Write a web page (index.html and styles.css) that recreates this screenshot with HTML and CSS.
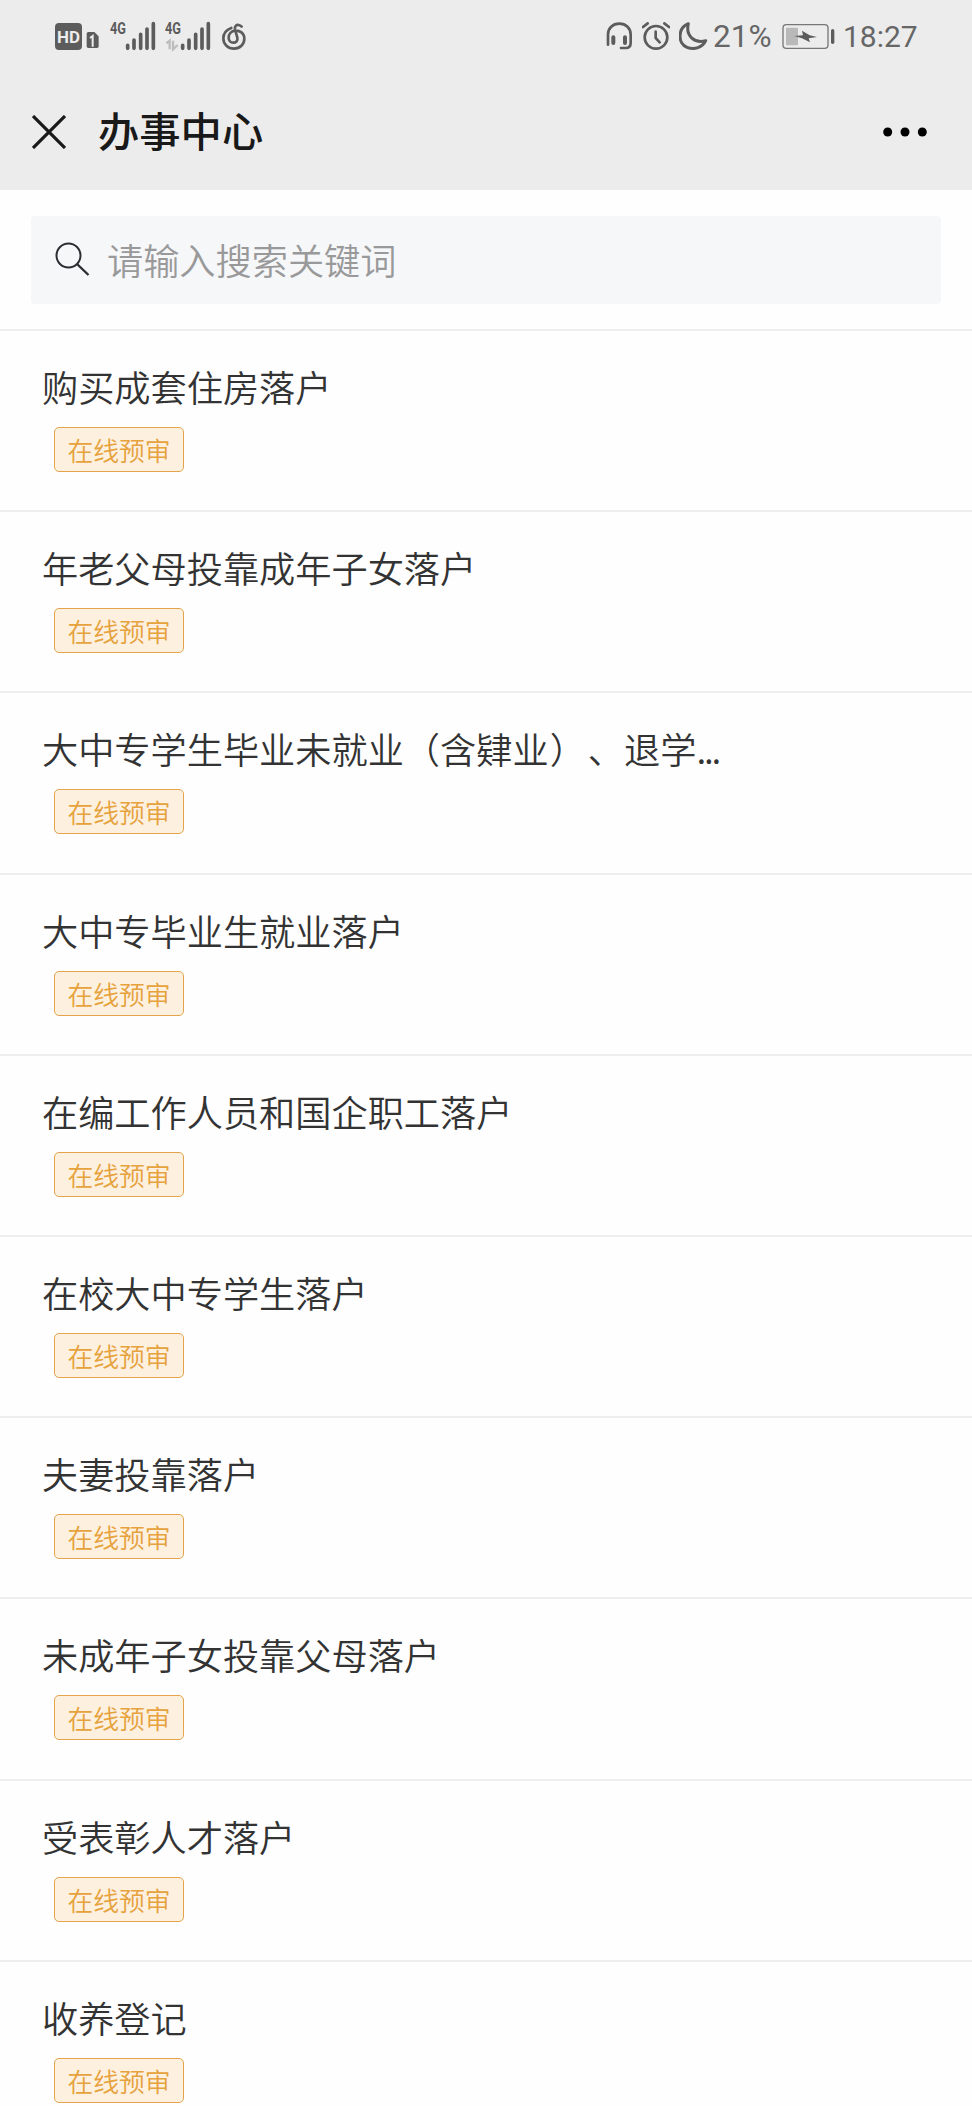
FILE: index.html
```html
<!DOCTYPE html>
<html lang="zh-CN">
<head>
    <meta charset="UTF-8">
    <meta name="viewport" content="width=device-width, initial-scale=1.0">
    <title>办事中心</title>
    <link rel="stylesheet" href="styles.css">
</head>
<body>
    <header class="header">
        <div class="status">
            <div class="status-left">
                <svg class="hd" width="44" height="30" viewBox="47 33 132 90">
                    <rect x="47" y="39" width="81" height="81" rx="12" fill="#5c5c5c"/>
                    <text x="53" y="98" font-size="47" font-weight="700" fill="#ececec" textLength="69" lengthAdjust="spacingAndGlyphs">HD</text>
                    <path d="M147 66h18l13 13v30q0 5-5 5h-26q-5 0-5-5v-38q0-5 5-5z" fill="#5c5c5c"/>
                    <path d="M152 84l8-6v32" fill="none" stroke="#ececec" stroke-width="6"/>
                </svg>
                <svg class="signal" width="46" height="42" viewBox="210 15 138 126">
                    <text x="210" y="73" font-size="49" font-weight="700" fill="#5c5c5c" textLength="48" lengthAdjust="spacingAndGlyphs">4G</text>
                    <path d="M263 106v9M282 90v25M302 73v42M321 57v58M340 41v74" stroke="#5c5c5c" stroke-width="11" stroke-linecap="round"/>
                </svg>
                <svg class="signal2" width="46" height="42" viewBox="374 15 138 126">
                    <text x="374" y="73" font-size="49" font-weight="700" fill="#5c5c5c" textLength="48" lengthAdjust="spacingAndGlyphs">4G</text>
                    <path d="M378 100l10-8v26M398 92v26l14-13" fill="none" stroke="#bdbdbd" stroke-width="7"/>
                    <path d="M427 106v9M446 90v25M466 73v42M485 57v58M504 41v74" stroke="#5c5c5c" stroke-width="11" stroke-linecap="round"/>
                </svg>
                <svg class="music" width="24" height="30" viewBox="546 33 72 90">
                    <path d="M574 54C558 60 550 71 550 85c0 18 14 31 32 31s31-13 31-30c0-17-14-25-27-24-12 1-20 10-20 21 0 9 6 15 14 15s14-6 12-15l-7-25c-2-9 4-14 11-13q5 1 9 5" fill="none" stroke="#5c5c5c" stroke-width="8" stroke-linecap="round"/>
                </svg>
            </div>
            <div class="status-right">
                <svg class="headset" width="27" height="30" viewBox="49 33 81 90">
                    <path d="M55 104V74c0-20 14-33 34-33s34 13 34 33v25q0 15-15 15H94" fill="none" stroke="#5c5c5c" stroke-width="8" stroke-linecap="round"/>
                    <path d="M71 82v17M106 82v17" stroke="#5c5c5c" stroke-width="12" stroke-linecap="round"/>
                </svg>
                <svg class="alarm" width="28" height="30" viewBox="157 33 84 90">
                    <circle cx="199" cy="82" r="34" fill="none" stroke="#5c5c5c" stroke-width="8"/>
                    <path d="M198 65v19l12 13M160 51l14-11M238 51l-14-11" fill="none" stroke="#5c5c5c" stroke-width="8" stroke-linecap="round"/>
                </svg>
                <svg class="moon" width="29" height="30" viewBox="268 33 87 90">
                    <path d="M296 41C263 54 264 101 292 112c22 9 47 0 56-20C316 101 287 79 296 41z" fill="none" stroke="#5c5c5c" stroke-width="9" stroke-linejoin="round"/>
                </svg>
                <span class="percent">21%</span>
                <svg class="battery" width="53" height="30" viewBox="575 33 159 90">
                    <rect x="578" y="44" width="135" height="71" rx="10" fill="none" stroke="#777" stroke-width="4"/>
                    <rect x="587" y="53" width="36" height="53" rx="3" fill="#b9b9b9"/>
                    <path d="M612 78l26-2-3-14 23 14 22 5-25 4 4 12-24-12z" fill="#5c5c5c"/>
                    <path d="M727 62v35" stroke="#5c5c5c" stroke-width="10" stroke-linecap="round"/>
                </svg>
                <span class="time">18:27</span>
            </div>
        </div>
        <div class="nav">
            <svg class="close" width="34" height="34" viewBox="0 0 34 34">
                <path d="M1 1l32 32M33 1L1 33" stroke="#191919" stroke-width="3.2"/>
            </svg>
            <h1>办事中心</h1>
            <svg class="more" width="44" height="10" viewBox="0 0 44 10">
                <circle cx="4.7" cy="5" r="4.5"/>
                <circle cx="22" cy="5" r="4.5"/>
                <circle cx="39.3" cy="5" r="4.5"/>
            </svg>
        </div>
    </header>

    <div class="search">
        <div class="search-box">
            <svg width="36" height="36" viewBox="0 0 36 36">
                <circle cx="14.5" cy="13.5" r="12" fill="none" stroke="#2b2d30" stroke-width="2"/>
                <path d="M23 22L34.5 33" stroke="#2b2d30" stroke-width="2.4"/>
            </svg>
            <input type="text" placeholder="请输入搜索关键词">
        </div>
    </div>

    <ul class="list">
        <li><p>购买成套住房落户</p><span class="tag">在线预审</span></li>
        <li><p>年老父母投靠成年子女落户</p><span class="tag">在线预审</span></li>
        <li><p>大中专学生毕业未就业（含肄业<span class="paren">）</span>、退学<span class="dots">...</span></p><span class="tag">在线预审</span></li>
        <li><p>大中专毕业生就业落户</p><span class="tag">在线预审</span></li>
        <li><p>在编工作人员和国企职工落户</p><span class="tag">在线预审</span></li>
        <li><p>在校大中专学生落户</p><span class="tag">在线预审</span></li>
        <li><p>夫妻投靠落户</p><span class="tag">在线预审</span></li>
        <li><p>未成年子女投靠父母落户</p><span class="tag">在线预审</span></li>
        <li><p>受表彰人才落户</p><span class="tag">在线预审</span></li>
        <li><p>收养登记</p><span class="tag">在线预审</span></li>
    </ul>
</body>
</html>
```
FILE: styles.css
```css
*{
    box-sizing: border-box;
    margin: 0;
    padding: 0;
}
body{
    height: 2106px;
    overflow: hidden;
    background-color: #fefefe;
    color: #333;
    font-family: "Noto Sans CJK SC", sans-serif;
    font-weight: 350;
    text-spacing-trim: space-all;
}
svg{
    display: block;
    flex: none;
}
.header{
    height: 190px;
    background-color: #ececec;
}
.status{
    display: flex;
    justify-content: space-between;
    height: 72px;
    padding: 0 56px 0 55px;
    color: #666;
    font-family: Roboto, sans-serif;
}
.status-left, .status-right{
    display: flex;
    align-items: center;
}
.signal{
    margin-left: 11px;
}
.signal2{
    margin-left: 9px;
}
.music{
    margin-left: 11px;
}
.alarm{
    margin-left: 9px;
}
.moon{
    margin-left: 9px;
}
.percent, .time{
    font-size: 30px;
    font-weight: 400;
    line-height: 30px;
    padding-top: 2px;
    white-space: nowrap;
}
.percent{
    width: 60px;
    margin-left: 5px;
    font-size: 31.5px;
}
.battery{
    margin-left: 9px;
}
.time{
    width: 73px;
    margin-left: 8px;
}
.nav{
    display: flex;
    align-items: center;
    height: 118px;
    padding: 2px 45px 0 32px;
}
.nav h1{
    margin: -6px 0 0 32px;
    font-size: 41.3px;
    font-weight: 500;
    line-height: 60px;
    color: #191919;
}
.more{
    margin-left: auto;
}
.search{
    height: 141px;
    padding: 26px 31px 0;
    border-bottom: 2px solid #eee;
}
.search-box{
    display: flex;
    align-items: center;
    height: 88px;
    padding-left: 23px;
    border-radius: 4px;
    background-color: #f6f7f9;
}
.search-box input{
    flex: 1;
    height: 60px;
    margin: -3px 0 0 17px;
    border: none;
    outline: none;
    background: none;
    font-family: inherit;
    font-size: 36.2px;
    font-weight: 350;
}
.search-box input::placeholder{
    color: #999;
    opacity: 1;
}
.list{
    list-style: none;
}
.list li{
    height: 181.2px;
    padding: 29px 42px 0;
    border-bottom: 2px solid #eee;
}
.list p{
    height: 52px;
    font-size: 36.2px;
    line-height: 52px;
    white-space: nowrap;
}
.paren{
    margin: 0 2px 0 1px;
}
.dots{
    letter-spacing: -2.2px;
}
.tag{
    display: block;
    width: 130px;
    height: 45px;
    margin: 15px 0 0 12px;
    border: 1px solid #e3a44c;
    border-radius: 5px;
    background-color: #fdf0df;
    color: #e6a23c;
    font-size: 25.8px;
    line-height: 43px;
    text-align: center;
    white-space: nowrap;
}
```
